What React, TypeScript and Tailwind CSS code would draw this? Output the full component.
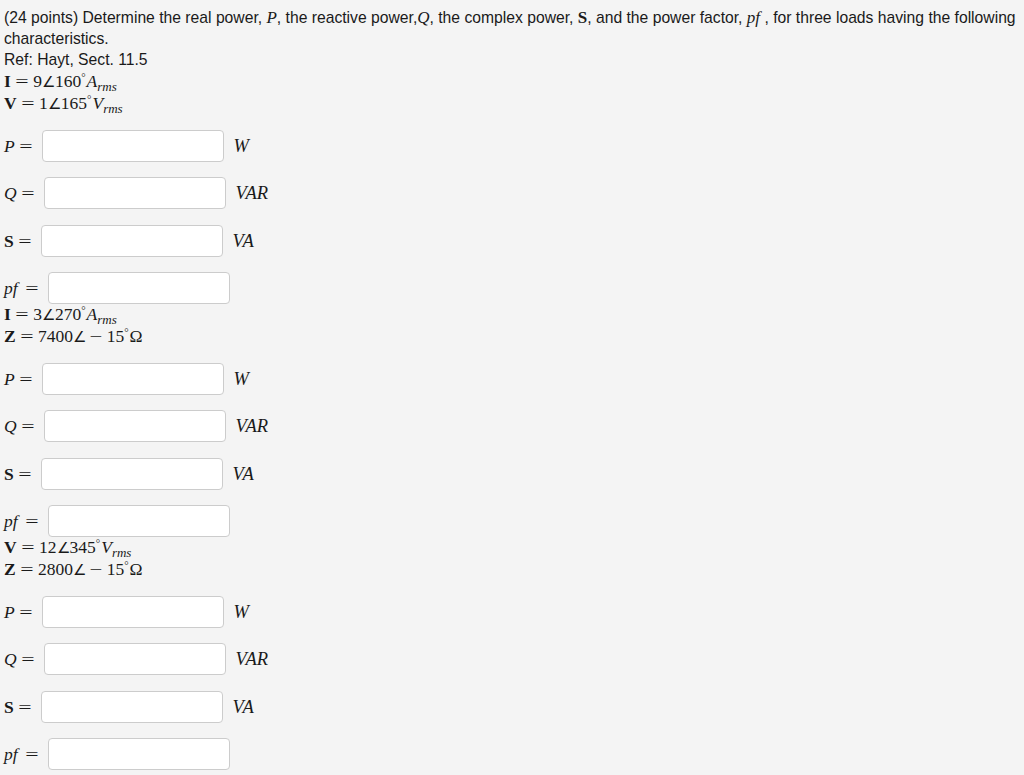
import type { ReactNode } from 'react'

const serif = "font-['Liberation_Serif','Times_New_Roman',serif]"

// ---- small math helpers ----

function V({ children }: { children: ReactNode }) {
  return <span className="italic">{children}</span>
}

function B({ children }: { children: ReactNode }) {
  return <span className="font-bold">{children}</span>
}

// TeX's "=" is wider than the text font's one, so stretch it a little
function Eq() {
  return (
    <span className="inline-block w-[13px] mx-[4.7px] text-center">
      <span className="inline-block scale-x-[1.35]">=</span>
    </span>
  )
}

function Minus() {
  return (
    <span className="inline-block w-[13px] mx-[3.8px] text-center">
      <span className="inline-block scale-x-[1.3]">−</span>
    </span>
  )
}

function Angle() {
  return (
    <span className="font-['DejaVu_Sans_ExtraLight','DejaVu_Sans',sans-serif] font-extralight text-[15px] leading-none">
      ∠
    </span>
  )
}

function Deg() {
  return <span className="text-[11px] align-[6px] leading-none mr-[1px]">°</span>
}

function Sub({ children }: { children: ReactNode }) {
  return <span className="italic text-[13px] align-[-4px] leading-none">{children}</span>
}

// ---- answer row ----

interface RowProps {
  label: ReactNode
  unit?: string
}

function Row({ label, unit }: RowProps) {
  return (
    <div className={`flex items-center pt-[15.5px] ${serif} text-[17.5px] leading-[22px]`}>
      <span className="flex items-center h-8 whitespace-nowrap">{label}</span>
      <input
        type="text"
        className="ml-[4.5px] w-[182px] h-8 bg-white border border-[#cccccc] rounded-[4px] outline-none"
      />
      {unit && <span className="ml-[10px] italic text-[18.5px]">{unit}</span>}
    </div>
  )
}

function Answers() {
  return (
    <div>
      <Row label={<><V>P</V><Eq /></>} unit="W" />
      <Row label={<><V>Q</V><Eq /></>} unit="VAR" />
      <Row label={<><B>S</B><Eq /></>} unit="VA" />
      <Row label={<><V>pf</V><span className="ml-[3.5px]" /><Eq /></>} />
    </div>
  )
}

function Line({ children }: { children: ReactNode }) {
  return <div className={`${serif} text-[17.5px] leading-[21.5px] h-[21.5px] whitespace-nowrap`}>{children}</div>
}

const inl = `${serif} text-[17px]`

export default function App() {
  return (
    <div className="min-h-screen bg-[#f4f4f4] text-[#1a1a1a] px-[4px] pt-[7px]">
      <div className="font-['Liberation_Sans',Arial,sans-serif] text-[15.7px] leading-[21px]">
        <div className="whitespace-nowrap h-[21px]">
          (24 points) Determine the real power, <span className={`${inl} italic`}>P</span>, the reactive
          power,<span className={`${inl} italic`}>Q</span>, the complex power,{' '}
          <span className={`${inl} font-bold`}>S</span>, and the power factor,{' '}
          <span className={`${inl} italic`}>pf</span> , for three loads having the following
        </div>
        <div>characteristics.</div>
        <div className="leading-[22px]">Ref: Hayt, Sect. 11.5</div>
      </div>

      {/* load 1 */}
      <Line>
        <B>I</B><Eq />9<Angle />160<Deg /><V>A</V><Sub>rms</Sub>
      </Line>
      <Line>
        <B>V</B><Eq />1<Angle />165<Deg /><V>V</V><Sub>rms</Sub>
      </Line>
      <Answers />

      {/* load 2 */}
      <Line>
        <B>I</B><Eq />3<Angle />270<Deg /><V>A</V><Sub>rms</Sub>
      </Line>
      <Line>
        <B>Z</B><Eq />7400<Angle /><Minus />15<Deg />Ω
      </Line>
      <Answers />

      {/* load 3 */}
      <Line>
        <B>V</B><Eq />12<Angle />345<Deg /><V>V</V><Sub>rms</Sub>
      </Line>
      <Line>
        <B>Z</B><Eq />2800<Angle /><Minus />15<Deg />Ω
      </Line>
      <Answers />
    </div>
  )
}
